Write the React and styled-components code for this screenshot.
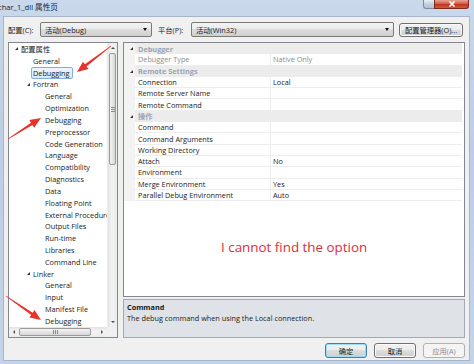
import React from "react";
import styled, { createGlobalStyle, css } from "styled-components";

const FONT = `"Open Sans", "Noto Sans", "Noto Sans CJK SC", sans-serif`;

const GlobalStyle = createGlobalStyle`
  html, body { margin: 0; padding: 0; width: 474px; height: 364px; overflow: hidden; background: #c4d5ea; }
  #root { width: 474px; height: 364px; }
  * { box-sizing: border-box; }
`;

const Window = styled.div`
  position: relative;
  width: 474px;
  height: 364px;
  display: flex;
  flex-direction: column;
  background: linear-gradient(180deg, #c9d8eb 0%, #bccee5 40%, #c3d4ea 100%);
  font-family: ${FONT};
  font-size: 7.3px;
  color: #1a1a1a;
`;

const TitleBar = styled.div`
  height: 16px;
  flex: none;
  display: flex;
  align-items: flex-start;
  justify-content: space-between;
`;

const Title = styled.div`
  margin-left: -2px;
  line-height: 14px;
  font-size: 7.6px;
  color: #1c1c1c;
`;

const CaptionButtons = styled.div`
  display: flex;
  margin-right: 5px;
`;

const HelpButton = styled.div`
  width: 11px;
  height: 9px;
  border: 1px solid #7d8ca0;
  border-top: none;
  border-right: none;
  border-radius: 0 0 0 3px;
  background: linear-gradient(180deg, #e9eef5, #c5d0de 50%, #b3c1d3);
`;

const CloseButton = styled.div`
  width: 35px;
  height: 9px;
  border: 1px solid #7b2b1d;
  border-top: none;
  border-radius: 0 0 3px 0;
  background: linear-gradient(180deg, #e8a392 0%, #d0604a 45%, #c0371f 55%, #cf5a3b 100%);
  display: flex;
  align-items: center;
  justify-content: center;
`;

const Body = styled.div`
  flex: 1;
  margin: 0 4px 3px 3px;
  background: #f0f0f0;
  border: 1px solid #a7b5c7;
  padding: 5px 4px 2px 4px;
  display: flex;
  flex-direction: column;
  gap: 5px;
  min-height: 0;
`;

const TopRow = styled.div`
  height: 15px;
  display: flex;
  align-items: center;
  flex: none;
`;

const Label = styled.div`
  width: ${(p) => p.$w}px;
  margin-left: ${(p) => p.$ml || 0}px;
  white-space: nowrap;
  color: #1a1a1a;
`;

const Combo = styled.div`
  width: ${(p) => p.$w}px;
  height: 15px;
  border: 1px solid #7a7a7a;
  border-radius: 2px;
  background: linear-gradient(180deg, #f3f3f3 0%, #ebebeb 49%, #dddddd 50%, #d0d0d0 100%);
  display: flex;
  align-items: center;
  justify-content: space-between;
  padding: 0 4px 0 4px;
`;

const DropArrow = styled.span`
  width: 0;
  height: 0;
  border-left: 2.5px solid transparent;
  border-right: 2.5px solid transparent;
  border-top: 3px solid #111;
`;

const winButton = css`
  border: 1px solid #707070;
  border-radius: 3px;
  background: linear-gradient(180deg, #f2f2f2 0%, #ebebeb 49%, #dddddd 50%, #cfcfcf 100%);
  box-shadow: inset 0 0 0 1px #fbfbfb;
  display: flex;
  align-items: center;
  justify-content: center;
  white-space: nowrap;
  color: #1a1a1a;
`;

const ConfigButton = styled.div`
  ${winButton}
  width: 64px;
  height: 14px;
  margin-left: 5px;
`;

const Main = styled.div`
  flex: 1;
  min-height: 0;
  display: flex;
  gap: 5px;
`;

const Tree = styled.div`
  width: 110px;
  flex: none;
  border: 1px solid #828790;
  background: #fff;
  display: grid;
  grid-template-columns: 1fr 10px;
  grid-template-rows: 1fr 10px;
  overflow: hidden;
`;

const TreeContent = styled.div`
  overflow: hidden;
  min-height: 0;
`;

const TreeRow = styled.div`
  height: 11.83px;
  display: flex;
  align-items: center;
  padding-left: ${(p) => 6 + p.$level * 12}px;
  white-space: nowrap;
`;

const ExpanderSlot = styled.span`
  width: 6px;
  flex: none;
  display: flex;
  align-items: center;
`;

const Expander = styled.span`
  width: 0;
  height: 0;
  border-left: 3.5px solid transparent;
  border-bottom: 3.5px solid #333;
`;

const TreeLabel = styled.span`
  ${(p) =>
    p.$selected &&
    css`
      border: 1px solid #84acdd;
      background: linear-gradient(180deg, #eef5fd, #d7e7fb);
      border-radius: 2px;
      padding: 0 2px 0 1px;
      margin-left: -2px;
      line-height: 10px;
    `}
`;

const VScroll = styled.div`
  background: linear-gradient(90deg, #e3e3e3, #f3f3f3 40%, #ececec);
  display: flex;
  flex-direction: column;
  border-left: 1px solid #ececec;
`;

const HScroll = styled.div`
  background: linear-gradient(180deg, #e3e3e3, #f3f3f3 40%, #ececec);
  display: flex;
  align-items: stretch;
`;

const Corner = styled.div`
  background: #f0f0f0;
`;

const ScrollArrowBox = styled.div`
  width: 10px;
  height: 10px;
  flex: none;
  display: flex;
  align-items: center;
  justify-content: center;
`;

const Tri = styled.span`
  width: 0;
  height: 0;
  ${(p) =>
    p.$dir === "up" &&
    css`
      border-left: 2px solid transparent;
      border-right: 2px solid transparent;
      border-bottom: 2.5px solid #4d4d4d;
    `}
  ${(p) =>
    p.$dir === "down" &&
    css`
      border-left: 2px solid transparent;
      border-right: 2px solid transparent;
      border-top: 2.5px solid #4d4d4d;
    `}
  ${(p) =>
    p.$dir === "left" &&
    css`
      border-top: 2px solid transparent;
      border-bottom: 2px solid transparent;
      border-right: 2.5px solid #4d4d4d;
    `}
  ${(p) =>
    p.$dir === "right" &&
    css`
      border-top: 2px solid transparent;
      border-bottom: 2px solid transparent;
      border-left: 2.5px solid #4d4d4d;
    `}
`;

const Track = styled.div`
  flex: 1;
  display: flex;
  flex-direction: ${(p) => (p.$vertical ? "column" : "row")};
  align-items: stretch;
  padding: ${(p) => (p.$vertical ? "0 1px" : "1px 0")};
`;

const Thumb = styled.div`
  flex: none;
  ${(p) =>
    p.$vertical
      ? css`
          height: ${p.$size}px;
          background: linear-gradient(90deg, #f4f4f4, #e6e6e6 50%, #d6d6d6);
          flex-direction: column;
        `
      : css`
          width: ${p.$size}px;
          background: linear-gradient(180deg, #f4f4f4, #e6e6e6 50%, #d6d6d6);
          flex-direction: row;
        `}
  border: 1px solid #9b9b9b;
  border-radius: 2px;
  display: flex;
  align-items: center;
  justify-content: center;
  gap: 1px;
`;

const Grip = styled.span`
  background: #8a8a8a;
  ${(p) => (p.$vertical ? css`width: 4px; height: 1px;` : css`width: 1px; height: 4px;`)}
`;

const RightCol = styled.div`
  flex: 1;
  min-width: 0;
  display: flex;
  flex-direction: column;
  gap: 2px;
`;

const PropGrid = styled.div`
  flex: 1;
  min-height: 0;
  border: 1px solid #828790;
  background: #fff;
  display: flex;
  flex-direction: column;
  padding-right: 2px;
  overflow: hidden;
`;

const PGRow = styled.div`
  height: 11.3px;
  flex: none;
  display: grid;
  grid-template-columns: 11px 135px 1fr;
  white-space: nowrap;
`;

const Gutter = styled.div`
  background: #f3f3f3;
  display: flex;
  align-items: center;
  justify-content: center;
  padding-left: 3px;
`;

const CategoryCell = styled.div`
  grid-column: 2 / 4;
  background: #ececec;
  display: flex;
  align-items: center;
  padding-left: 3px;
  font-weight: 700;
  color: #9aa5b4;
`;

const NameCell = styled.div`
  display: flex;
  align-items: center;
  padding-left: 3px;
  border-bottom: 1px solid #ededed;
  color: ${(p) => (p.$disabled ? "#8d8d8d" : "#1a1a1a")};
  overflow: hidden;
`;

const ValueCell = styled.div`
  display: flex;
  align-items: center;
  padding-left: 2px;
  border-left: 1px solid #ededed;
  border-bottom: 1px solid #ededed;
  color: ${(p) => (p.$disabled ? "#8d8d8d" : "#1a1a1a")};
`;

const EmptyArea = styled.div`
  flex: 1;
  padding: 38px 0 0 97px;
`;

const Annotation = styled.div`
  font-size: 13.4px;
  line-height: 16px;
  color: #d9303b;
  white-space: nowrap;
`;

const Desc = styled.div`
  height: 39px;
  flex: none;
  border: 1px solid #a3a9b1;
  background: #dfe3e8;
  padding: 2px 3px;
  line-height: 11px;
`;

const DescTitle = styled.div`
  font-weight: 700;
`;

const Footer = styled.div`
  height: 15px;
  flex: none;
  display: flex;
  justify-content: flex-end;
  gap: 7px;
`;

const DialogButton = styled.div`
  ${winButton}
  width: 42px;
  height: 15px;
  ${(p) =>
    p.$default &&
    css`
      border-color: #3c7fb1;
      box-shadow: inset 0 0 0 1px #9fdcf6;
    `}
  ${(p) =>
    p.$disabled &&
    css`
      border-color: #adb2b5;
      background: #f4f4f4;
      box-shadow: none;
      color: #8c8c8c;
    `}
`;

const Overlay = styled.svg`
  position: absolute;
  left: 0;
  top: 0;
  width: 474px;
  height: 364px;
  pointer-events: none;
`;

const treeItems = [
  { label: "配置属性", level: 0, expander: true },
  { label: "General", level: 1 },
  { label: "Debugging", level: 1, selected: true },
  { label: "Fortran", level: 1, expander: true },
  { label: "General", level: 2 },
  { label: "Optimization", level: 2 },
  { label: "Debugging", level: 2 },
  { label: "Preprocessor", level: 2 },
  { label: "Code Generation", level: 2 },
  { label: "Language", level: 2 },
  { label: "Compatibility", level: 2 },
  { label: "Diagnostics", level: 2 },
  { label: "Data", level: 2 },
  { label: "Floating Point", level: 2 },
  { label: "External Procedures", level: 2 },
  { label: "Output Files", level: 2 },
  { label: "Run-time", level: 2 },
  { label: "Libraries", level: 2 },
  { label: "Command Line", level: 2 },
  { label: "Linker", level: 1, expander: true },
  { label: "General", level: 2 },
  { label: "Input", level: 2 },
  { label: "Manifest File", level: 2 },
  { label: "Debugging", level: 2 },
];

const props = [
  { cat: "Debugger" },
  { name: "Debugger Type", value: "Native Only", disabled: true },
  { cat: "Remote Settings" },
  { name: "Connection", value: "Local" },
  { name: "Remote Server Name", value: "" },
  { name: "Remote Command", value: "" },
  { cat: "操作" },
  { name: "Command", value: "" },
  { name: "Command Arguments", value: "" },
  { name: "Working Directory", value: "" },
  { name: "Attach", value: "No" },
  { name: "Environment", value: "" },
  { name: "Merge Environment", value: "Yes" },
  { name: "Parallel Debug Environment", value: "Auto" },
];

function arrowPoints(x1, y1, x2, y2, tail = 0.8, shaft = 2.6, headLen = 11, headW = 9) {
  const dx = x2 - x1;
  const dy = y2 - y1;
  const L = Math.hypot(dx, dy);
  const ux = dx / L;
  const uy = dy / L;
  const nx = -uy;
  const ny = ux;
  const bx = x2 - ux * headLen;
  const by = y2 - uy * headLen;
  const pts = [
    [x1 + (nx * tail) / 2, y1 + (ny * tail) / 2],
    [bx + (nx * shaft) / 2, by + (ny * shaft) / 2],
    [bx + (nx * headW) / 2, by + (ny * headW) / 2],
    [x2, y2],
    [bx - (nx * headW) / 2, by - (ny * headW) / 2],
    [bx - (nx * shaft) / 2, by - (ny * shaft) / 2],
    [x1 - (nx * tail) / 2, y1 - (ny * tail) / 2],
  ];
  return pts.map((p) => p.map((v) => v.toFixed(1)).join(",")).join(" ");
}

export default function App() {
  return (
    <>
      <GlobalStyle />
      <Window>
        <TitleBar>
          <Title>char_1_dll 属性页</Title>
          <CaptionButtons>
            <HelpButton />
            <CloseButton>
              <svg width="8" height="6" viewBox="0 0 8 6">
                <path d="M1.5 0.5 L6.5 5.5 M6.5 0.5 L1.5 5.5" stroke="#fff" strokeWidth="1.6" />
              </svg>
            </CloseButton>
          </CaptionButtons>
        </TitleBar>
        <Body>
          <TopRow>
            <Label $w={32}>配置(C):</Label>
            <Combo $w={112}>
              <span>活动(Debug)</span>
              <DropArrow />
            </Combo>
            <Label $w={33} $ml={6}>平台(P):</Label>
            <Combo $w={203}>
              <span>活动(Win32)</span>
              <DropArrow />
            </Combo>
            <ConfigButton>配置管理器(O)...</ConfigButton>
          </TopRow>
          <Main>
            <Tree>
              <TreeContent>
                {treeItems.map((it, i) => (
                  <TreeRow key={i} $level={it.level}>
                    <ExpanderSlot>{it.expander && <Expander />}</ExpanderSlot>
                    <TreeLabel $selected={it.selected}>{it.label}</TreeLabel>
                  </TreeRow>
                ))}
              </TreeContent>
              <VScroll>
                <ScrollArrowBox>
                  <Tri $dir="up" />
                </ScrollArrowBox>
                <Track $vertical>
                  <Thumb $vertical $size={112}>
                    <Grip $vertical />
                    <Grip $vertical />
                    <Grip $vertical />
                  </Thumb>
                </Track>
                <ScrollArrowBox>
                  <Tri $dir="down" />
                </ScrollArrowBox>
              </VScroll>
              <HScroll>
                <ScrollArrowBox>
                  <Tri $dir="left" />
                </ScrollArrowBox>
                <Track>
                  <Thumb $size={72}>
                    <Grip />
                    <Grip />
                    <Grip />
                  </Thumb>
                </Track>
                <ScrollArrowBox>
                  <Tri $dir="right" />
                </ScrollArrowBox>
              </HScroll>
              <Corner />
            </Tree>
            <RightCol>
              <PropGrid>
                {props.map((p, i) =>
                  p.cat ? (
                    <PGRow key={i}>
                      <Gutter>
                        <Expander />
                      </Gutter>
                      <CategoryCell>{p.cat}</CategoryCell>
                    </PGRow>
                  ) : (
                    <PGRow key={i}>
                      <Gutter />
                      <NameCell $disabled={p.disabled}>{p.name}</NameCell>
                      <ValueCell $disabled={p.disabled}>{p.value}</ValueCell>
                    </PGRow>
                  )
                )}
                <EmptyArea>
                  <Annotation>I cannot find the option</Annotation>
                </EmptyArea>
              </PropGrid>
              <Desc>
                <DescTitle>Command</DescTitle>
                <div>The debug command when using the Local connection.</div>
              </Desc>
            </RightCol>
          </Main>
          <Footer>
            <DialogButton $default>确定</DialogButton>
            <DialogButton>取消</DialogButton>
            <DialogButton $disabled>应用(A)</DialogButton>
          </Footer>
        </Body>
        <Overlay viewBox="0 0 474 364">
          <polygon points={arrowPoints(111, 46, 77, 72)} fill="#e8322a" />
          <polygon points={arrowPoints(8, 139, 41, 118)} fill="#e8322a" />
          <polygon points={arrowPoints(6, 296, 41, 320)} fill="#e8322a" />
        </Overlay>
      </Window>
    </>
  );
}
